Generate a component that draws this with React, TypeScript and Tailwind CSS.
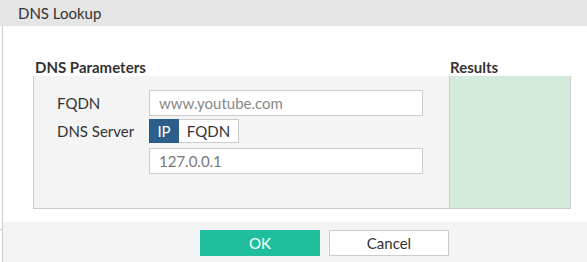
import React from "react";

export default function App() {
  return (
    <div className="relative w-[587px] h-[262px] bg-white overflow-hidden font-['Lato','Liberation_Sans',sans-serif] text-[15px] text-[#333]">
      <div className="h-[26px] bg-[#e5e5e5] pl-[18px] leading-[26px]">DNS Lookup</div>
      <div className="absolute left-0 top-[229px] w-[2px] h-px bg-[#ccc]" />
      <div className="ml-[2px] border-l border-[#ccc] h-[236px] flex flex-col">
        <div className="h-[196px] pt-[32px] pl-[30px] flex">
          <div className="w-[416px] flex flex-col">
            <div className="h-[18px] leading-[18px] font-bold pl-[2px]">DNS Parameters</div>
            <div className="h-[133px] bg-[#f4f4f4] border-l border-b border-[#ccc] pt-[14px] pl-[23px]">
              <div className="flex items-center h-[26px]">
                <div className="w-[92px]">FQDN</div>
                <div className="w-[274px] h-[26px] bg-white border border-[#ccc] pl-[9px] leading-[24px] text-[#888]">www.youtube.com</div>
              </div>
              <div className="flex items-center h-[24px] mt-[3px]">
                <div className="w-[92px]">DNS Server</div>
                <div className="flex h-[24px]">
                  <div className="w-[30px] h-[24px] bg-[#2b5f8a] text-white text-center leading-[24px]">IP</div>
                  <div className="w-[60px] h-[24px] bg-white border border-l-0 border-[#ccc] text-center leading-[22px]">FQDN</div>
                </div>
              </div>
              <div className="flex items-center h-[26px] mt-[5px]">
                <div className="w-[92px]" />
                <div className="w-[274px] h-[26px] bg-white border border-[#ccc] pl-[9px] leading-[24px] text-[#777]">127.0.0.1</div>
              </div>
            </div>
          </div>
          <div className="w-[122px] flex flex-col">
            <div className="h-[18px] leading-[18px] font-bold pl-[1px]">Results</div>
            <div className="h-[133px] bg-[#d4ebdb] border-l border-r border-b border-[#ccc]" />
          </div>
        </div>
        <div className="flex-1 bg-[#f4f4f4] pt-[8px] pl-[197px] flex gap-[9px]">
          <div className="w-[120px] h-[26px] bg-[#1fbf9d] text-white text-center leading-[26px]">OK</div>
          <div className="w-[120px] h-[26px] bg-white border border-[#ccc] text-center leading-[24px]">Cancel</div>
        </div>
      </div>
    </div>
  );
}
